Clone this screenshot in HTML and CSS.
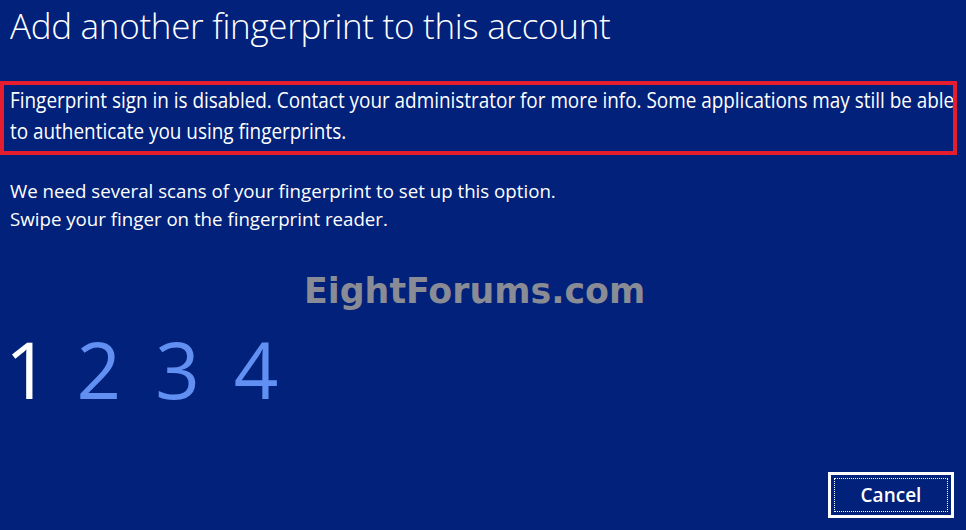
FILE: index.html
```html
<!DOCTYPE html>
<html lang="en">
<head>
    <meta charset="UTF-8">
    <title>Add another fingerprint</title>
    <link rel="stylesheet" href="styles.css">
</head>
<body>
    <div class="page">
        <h1 class="title">Add another fingerprint to this account</h1>

        <div class="notice">
            <p class="notice-text">Fingerprint sign in is disabled. Contact your administrator for more info. Some applications may still be able<br>to authenticate you using fingerprints.</p>
        </div>

        <p class="info">We need several scans of your fingerprint to set up this option.<br>Swipe your finger on the fingerprint reader.</p>

        <div class="watermark">EightForums.com</div>

        <div class="steps">
            <span class="step step-current">1</span>
            <span class="step">2</span>
            <span class="step">3</span>
            <span class="step">4</span>
        </div>

        <div class="actions">
            <button class="button">Cancel</button>
        </div>
    </div>
</body>
</html>
```

FILE: styles.css
```css
html, body {
    margin: 0;
    height: 100%;
}
body {
    background-color: #01217a;
    color: #fff;
    font-family: "Open Sans", "Noto Sans", sans-serif;
    overflow: hidden;
}
.page {
    height: 530px;
    display: flex;
    flex-direction: column;
}
.title {
    margin: 0 0 0 10px;
    font-weight: 300;
    font-size: 35px;
    line-height: 52px;
    letter-spacing: -0.3px;
}
.notice {
    margin: 29px 9px 0 0;
    height: 66px;
    border: 4px solid #e51d2e;
    overflow: hidden;
}
.notice-text {
    margin: 0 0 0 6px;
    font-size: 21px;
    line-height: 31px;
    white-space: nowrap;
    transform: scaleX(0.9);
    transform-origin: left;
}
.info {
    margin: 22px 0 0 10px;
    font-size: 18.7px;
    line-height: 28px;
}
.watermark {
    margin: 38px 0 0 304px;
    font-family: "DejaVu Sans", sans-serif;
    font-weight: bold;
    font-size: 34.8px;
    line-height: 40px;
    color: #8a8c95;
}
.steps {
    margin: 18px 0 0 5px;
    display: flex;
    gap: 34px;
    font-weight: 400;
    font-size: 78px;
    line-height: 80px;
}
.step {
    color: #6190f2;
}
.step-current {
    margin-right: -7px;
    color: #fff;
}
.actions {
    margin-top: auto;
    padding: 0 12px 12px 0;
    display: flex;
    justify-content: flex-end;
}
.button {
    width: 126px;
    height: 46px;
    background-color: transparent;
    border: 3px solid #fff;
    color: #fff;
    font-family: "Open Sans", sans-serif;
    font-weight: 600;
    font-size: 19px;
    outline: 1px dotted #fff;
    outline-offset: -7px;
}
```
